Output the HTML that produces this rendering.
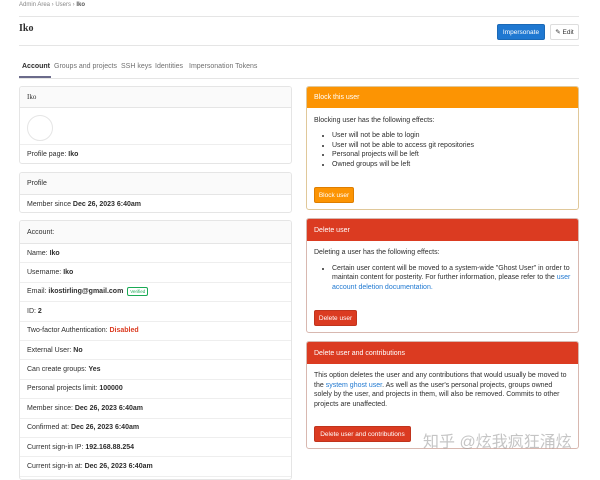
<!DOCTYPE html>
<html><head><meta charset="utf-8"><style>
*{margin:0;padding:0;box-sizing:border-box}
body{width:600px;height:466px;overflow:hidden;background:#fff;font-family:"Liberation Sans","Noto Sans CJK SC",sans-serif;font-size:7px;color:#2e2e2e;position:relative}
.a{position:absolute;white-space:nowrap}
.hl{position:absolute;left:19px;width:560px;height:1px;background:#e5e5e5}
.card{position:absolute;border:1px solid #e5e5e5;border-radius:3px;overflow:hidden}
.ch{background:#fafafa;border-bottom:1px solid #e5e5e5;padding:0 7px;display:flex;align-items:center}
.row{border-bottom:1px solid #eee;height:19.4px;padding:0 7px;display:flex;align-items:center}
b{font-weight:bold}
.btn{position:absolute;border-radius:2px;color:#fff;font-size:6.5px;display:flex;align-items:center;justify-content:center}
ul{padding-left:18px}
a{color:#1f78d1;text-decoration:none}
</style></head><body>
<div class="a" style="left:19px;top:2px;font-size:6px;color:#888">Admin Area › Users › <b style="color:#555">Iko</b></div>
<div class="hl" style="top:16px"></div>
<div class="a" style="left:19px;top:23px;font-size:10px;font-weight:bold;font-family:'Liberation Serif',serif">Iko</div>
<div class="btn" style="left:497px;top:24px;width:48px;height:16px;background:#1f78d1;border:1px solid #1b69b6">Impersonate</div>
<div class="btn" style="left:550px;top:24px;width:29px;height:16px;background:#fff;border:1px solid #ddd;color:#333">✎ Edit</div>
<div class="hl" style="top:45px"></div>
<div class="a" style="left:22px;top:63px;font-weight:bold">Account</div>
<div class="a" style="left:54px;top:63px;color:#707070">Groups and projects</div>
<div class="a" style="left:121px;top:63px;color:#707070">SSH keys</div>
<div class="a" style="left:155px;top:63px;color:#707070">Identities</div>
<div class="a" style="left:189px;top:63px;color:#707070">Impersonation Tokens</div>
<div class="hl" style="top:78px"></div>
<div class="a" style="left:19px;top:76px;width:32px;height:2px;background:#6b6b8b"></div>

<div class="card" style="left:19px;top:86px;width:273px;height:78px">
<div class="ch" style="height:21px;font-family:'Liberation Serif',serif">Iko</div>
<div style="height:37px;border-bottom:1px solid #eee;position:relative"><div style="position:absolute;left:7px;top:7px;width:26px;height:26px;border-radius:50%;border:1px solid #e5e5e5"></div></div>
<div style="padding:0 7px;height:18px;display:flex;align-items:center">Profile page:&nbsp;<b>Iko</b></div>
</div>
<div class="card" style="left:19px;top:172px;width:273px;height:41px">
<div class="ch" style="height:22px">Profile</div>
<div style="padding:0 7px;height:18px;display:flex;align-items:center">Member since&nbsp;<b>Dec 26, 2023 6:40am</b></div>
</div>
<div class="card" style="left:19px;top:220px;width:273px;height:260px">
<div class="ch" style="height:23px">Account:</div>
<div class="row">Name:&nbsp;<b>Iko</b></div>
<div class="row">Username:&nbsp;<b>Iko</b></div>
<div class="row">Email:&nbsp;<b>ikostirling@gmail.com</b>&nbsp;&nbsp;<span style="border:1px solid #1aaa55;color:#1aaa55;font-size:4.5px;padding:1px 2px;border-radius:2px">Verified</span></div>
<div class="row">ID:&nbsp;<b>2</b></div>
<div class="row">Two-factor Authentication:&nbsp;<b style="color:#db3b21">Disabled</b></div>
<div class="row">External User:&nbsp;<b>No</b></div>
<div class="row">Can create groups:&nbsp;<b>Yes</b></div>
<div class="row">Personal projects limit:&nbsp;<b>100000</b></div>
<div class="row">Member since:&nbsp;<b>Dec 26, 2023 6:40am</b></div>
<div class="row">Confirmed at:&nbsp;<b>Dec 26, 2023 6:40am</b></div>
<div class="row">Current sign-in IP:&nbsp;<b>192.168.88.254</b></div>
<div class="row">Current sign-in at:&nbsp;<b>Dec 26, 2023 6:40am</b></div>
</div>

<div class="card" style="left:306px;top:86px;width:273px;height:124px;border-color:#e0c89a">
<div style="height:21px;background:#fc9403;color:#fff;padding:0 7px;display:flex;align-items:center">Block this user</div>
<div style="padding:8px 7px;line-height:9.4px">Blocking user has the following effects:
<ul style="margin-top:6px"><li>User will not be able to login</li><li>User will not be able to access git repositories</li><li>Personal projects will be left</li><li>Owned groups will be left</li></ul></div>
</div>
<div class="btn" style="left:314px;top:187px;width:40px;height:16px;background:#fc9403;border:1px solid #de7e00">Block user</div>

<div class="card" style="left:306px;top:218px;width:273px;height:115px;border-color:#d8b8b0">
<div style="height:22px;background:#db3b21;color:#fff;padding:0 7px;display:flex;align-items:center">Delete user</div>
<div style="padding:7px 7px;line-height:9.6px">Deleting a user has the following effects:
<ul style="margin-top:6px"><li style="white-space:normal">Certain user content will be moved to a system-wide "Ghost User" in order to maintain content for posterity. For further information, please refer to the <a>user account deletion documentation.</a></li></ul></div>
</div>
<div class="btn" style="left:314px;top:310px;width:43px;height:16px;background:#db3b21;border:1px solid #c0341d">Delete user</div>

<div class="card" style="left:306px;top:341px;width:273px;height:108px;border-color:#d8b8b0">
<div style="height:22px;background:#db3b21;color:#fff;padding:0 7px;display:flex;align-items:center">Delete user and contributions</div>
<div style="padding:7px 7px;line-height:9.6px;white-space:normal">This option deletes the user and any contributions that would usually be moved to the <a>system ghost user</a>. As well as the user's personal projects, groups owned solely by the user, and projects in them, will also be removed. Commits to other projects are unaffected.</div>
</div>
<div class="btn" style="left:314px;top:426px;width:97px;height:16px;background:#db3b21;border:1px solid #c0341d">Delete user and contributions</div>
<div class="a" style="left:423px;top:428px;font-size:16px;color:rgba(150,150,150,0.55)">知乎 @炫我疯狂涌炫</div>
</body></html>
